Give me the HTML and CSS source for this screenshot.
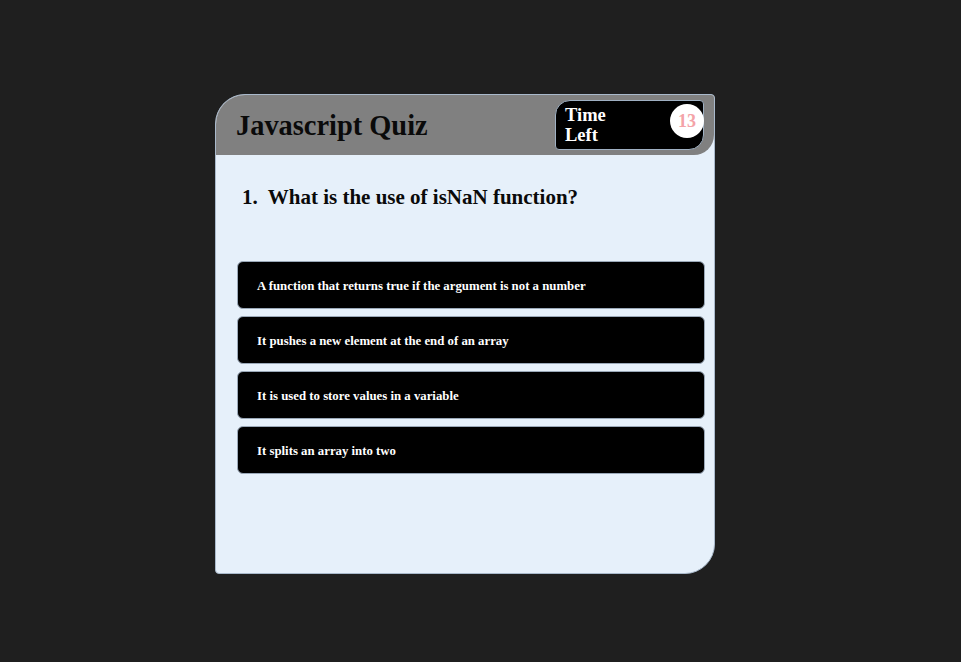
FILE: index.html
```html
<!DOCTYPE html>
<html>
<head>
<meta charset="utf-8">
<link rel="stylesheet" href="styles.css">
</head>
<body>
<div class="stage">
  <div class="card">
    <div class="header">
      <h1 class="title">Javascript Quiz</h1>
      <div class="timer">
        <div class="timer-label">Time Left</div>
        <div class="timer-count">13</div>
      </div>
    </div>
    <div class="question"><span class="qnum">1.</span>What is the use of isNaN function?</div>
    <div class="options">
      <div class="option">A function that returns true if the argument is not a number</div>
      <div class="option">It pushes a new element at the end of an array</div>
      <div class="option">It is used to store values in a variable</div>
      <div class="option">It splits an array into two</div>
    </div>
  </div>
</div>
</body>
</html>
```
FILE: styles.css
```css
html, body {
  margin: 0;
  padding: 0;
  background: #1f1f1f;
}
body {
  font-family: "Liberation Serif", "DejaVu Serif", serif;
  font-weight: bold;
}
.stage {
  padding: 94px 0 0 215px;
}
.card {
  width: 498px;
  height: 478px;
  border: 1px solid #a9b9cb;
  border-radius: 30px 4px 30px 4px;
  background: #e6f0fa;
  overflow: hidden;
}
.header {
  height: 60px;
  background: #808080;
  display: flex;
  justify-content: space-between;
  align-items: flex-start;
  padding: 0 10px 0 20px;
  border-bottom-right-radius: 20px;
}
.title {
  margin: 14px 0 0 0;
  font-size: 28.4px;
  line-height: 34px;
  color: #0a0a0a;
}
.timer {
  margin-top: 5px;
  box-sizing: border-box;
  width: 149px;
  height: 50px;
  background: #000;
  border: 1px solid #9fb0c2;
  border-radius: 15px 4px 15px 4px;
  display: flex;
  align-items: flex-start;
  padding: 0 0 0 9px;
}
.timer-label {
  width: 52px;
  margin-top: 4px;
  color: #fff;
  font-size: 18.5px;
  line-height: 20px;
}
.timer-count {
  margin: 3px -1px 0 auto;
  width: 34px;
  height: 34px;
  border-radius: 50%;
  background: #fff;
  color: #f4a3a8;
  font-size: 18px;
  line-height: 34px;
  text-align: center;
}
.question {
  margin: 30px 0 0 26px;
  font-size: 21px;
  line-height: 24px;
  color: #0a0a0a;
}
.qnum {
  margin-right: 10px;
}
.options {
  margin: 52px 9px 0 21px;
  display: flex;
  flex-direction: column;
  gap: 7px;
}
.option {
  height: 48px;
  box-sizing: border-box;
  background: #000;
  border: 1px solid #9aa8b8;
  border-radius: 6px;
  padding: 2px 19px 0;
  display: flex;
  align-items: center;
  color: #fff;
  font-size: 12.8px;
}
```
